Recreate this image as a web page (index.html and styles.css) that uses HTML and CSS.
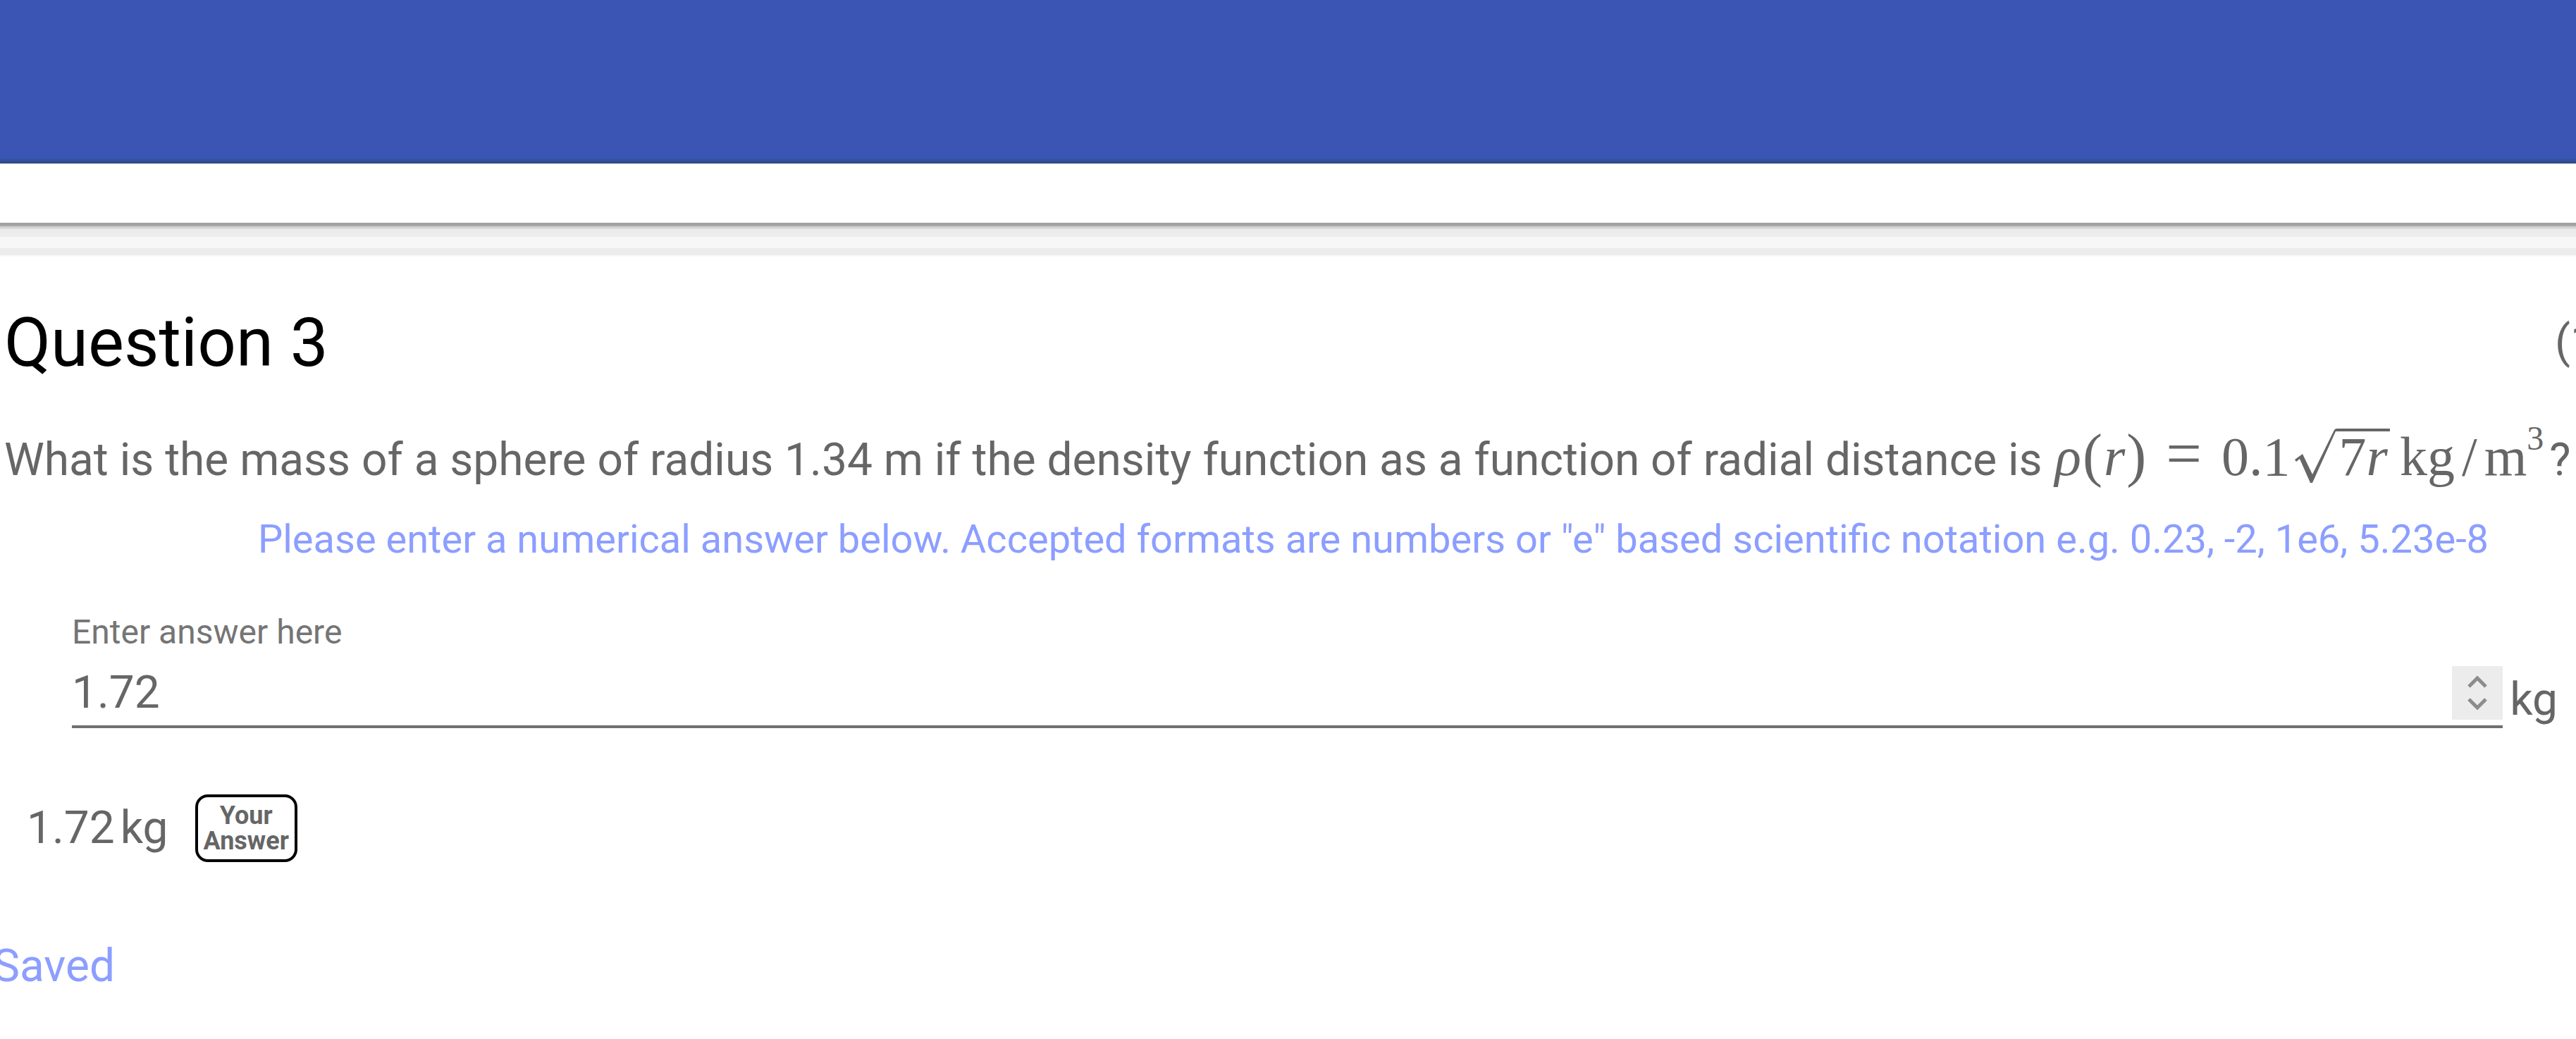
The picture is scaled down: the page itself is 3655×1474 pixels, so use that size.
FILE: index.html
```html
<!DOCTYPE html>
<html lang="en">
<head>
    <meta charset="UTF-8">
    <meta name="viewport" content="width=device-width, initial-scale=1.0">
    <title>Question 3</title>
    <link rel="stylesheet" href="styles.css">
</head>
<body>
    <header class="app-bar"></header>
    <div class="toolbar"></div>
    <div class="divider"></div>

    <main class="question">
        <div class="question-head">
            <h1>Question 3</h1>
            <span class="points">(1</span>
        </div>

        <p class="prompt">
            <span>What is the mass of a sphere of radius 1.34 m if the density function as a function of radial distance is</span>
            <span class="formula">
                <i>ρ</i><span class="paren">(</span><i>r</i><span class="paren">)</span><span class="equals">=</span><span>0.1</span>
                <span class="root">
                    <svg class="root-sign" viewBox="0 0 60 77" aria-hidden="true">
                        <path d="M0 44 L11 36 L25 65 L56 2 Q57 0 60 0 L60 4 L58 4 L25 77 L22 77 L7 43 L2 47 Z"/>
                    </svg>
                    <span class="radicand">7<i>r</i></span>
                </span>
                <span class="unit">kg<span class="slash">/</span>m<sup>3</sup></span>
            </span>
            <span>?</span>
        </p>

        <p class="hint">Please enter a numerical answer below. Accepted formats are numbers or "e" based scientific notation e.g. 0.23, -2, 1e6, 5.23e-8</p>

        <div class="answer-row">
            <div class="field">
                <label for="answer">Enter answer here</label>
                <div class="field-box">
                    <input type="number" id="answer" value="1.72" step="0.01">
                    <div class="spinner">
                        <button type="button" aria-label="Increase" onclick="document.getElementById('answer').stepUp()">
                            <svg viewBox="0 0 32 20"><path d="M4 17 L16 5 L28 17"/></svg>
                        </button>
                        <button type="button" aria-label="Decrease" onclick="document.getElementById('answer').stepDown()">
                            <svg viewBox="0 0 32 20"><path d="M4 3 L16 15 L28 3"/></svg>
                        </button>
                    </div>
                </div>
            </div>
            <span class="field-unit">kg</span>
        </div>

        <div class="result">
            <span>1.72</span>
            <span>kg</span>
            <span class="badge">Your<br>Answer</span>
        </div>

        <p class="status">Saved</p>
    </main>
</body>
</html>
```
FILE: styles.css
```css
* {
    margin: 0;
    padding: 0;
    box-sizing: border-box;
}

body {
    background-color: #fff;
    color: #666;
    font-family: Roboto, sans-serif;
    font-size: 64px;
    line-height: 96px;
    overflow-x: hidden;
}

/* Top bars */
.app-bar {
    height: 232px;
    background: linear-gradient(#3a55b4 224px, #3055a8 226px, #34477e);
}

.toolbar {
    height: 84px;
    background-color: #fff;
}

.divider {
    height: 48px;
    background: linear-gradient(#a2a2a2 4px, #c4c4c4 5px, #ececec 10px, #ececec 20px, #f7f7f7 20px, #f7f7f7 36px, #ececec 36px, #ececec 46px, #f7f7f7 46px);
}

.question {
    padding: 74px 0 0 6px;
}

.question-head {
    display: flex;
    justify-content: space-between;
    align-items: center;
}

.question-head h1 {
    color: #000;
    font-size: 96px;
    font-weight: 400;
}

.points {
    width: 30px;
    white-space: nowrap;
}

/* Question text */
.prompt {
    display: flex;
    align-items: baseline;
    margin-top: 66px;
    white-space: nowrap;
}

.formula {
    display: flex;
    align-items: baseline;
    margin: 0 8px 0 18px;
    font-family: "Liberation Serif", serif;
    font-size: 78px;
}

.paren {
    padding: 0 2px;
    font-size: 84px;
    line-height: 72px;
}

.equals {
    margin: 0 28px 0 26px;
    font-size: 90px;
    line-height: 72px;
}

.root {
    display: flex;
    align-items: baseline;
    margin-left: 6px;
}

.root-sign {
    align-self: flex-start;
    width: 60px;
    height: 77px;
    fill: #666;
}

.radicand {
    padding: 0 3px;
    line-height: 72px;
    border-top: 4px solid #666;
}

.unit {
    margin-left: 14px;
}

.slash {
    padding: 0 10px;
}

.unit sup {
    font-size: 48px;
    line-height: 0;
    vertical-align: 36px;
}

.hint {
    margin-top: 16px;
    padding-left: 236px;
    text-align: center;
    color: #8c9eff;
    font-size: 56px;
}

/* Answer field */
.answer-row {
    display: flex;
    align-items: flex-end;
    gap: 10px;
    margin-top: 56px;
    padding: 0 26px 0 96px;
}

.field {
    flex: 1;
}

.field label {
    display: block;
    color: #757575;
    font-size: 48px;
    line-height: 56px;
}

.field-box {
    display: flex;
    align-items: center;
    height: 108px;
    padding-top: 12px;
    border-bottom: 4px solid #707070;
}

.field input {
    flex: 1;
    border: none;
    outline: none;
    background: none;
    color: #666;
    font: inherit;
    appearance: textfield;
}

.field-unit {
    line-height: 80px;
}

.spinner {
    display: flex;
    flex-direction: column;
    justify-content: center;
    gap: 12px;
    width: 72px;
    height: 76px;
    background-color: #ececec;
}

.spinner button {
    display: flex;
    justify-content: center;
    border: none;
    background: none;
}

.spinner svg {
    width: 32px;
    height: 20px;
    fill: none;
    stroke: #8c8c8c;
    stroke-width: 5;
}

/* Submitted answer */
.result {
    display: flex;
    align-items: center;
    gap: 8px;
    margin-top: 94px;
    padding-left: 32px;
}

.badge {
    margin-left: 30px;
    padding: 8px;
    border: 4px solid #000;
    border-radius: 18px;
    font-size: 36px;
    font-weight: 700;
    line-height: 36px;
    text-align: center;
}

.status {
    margin: 100px 0 0 -16px;
    color: #8c9eff;
}
```
